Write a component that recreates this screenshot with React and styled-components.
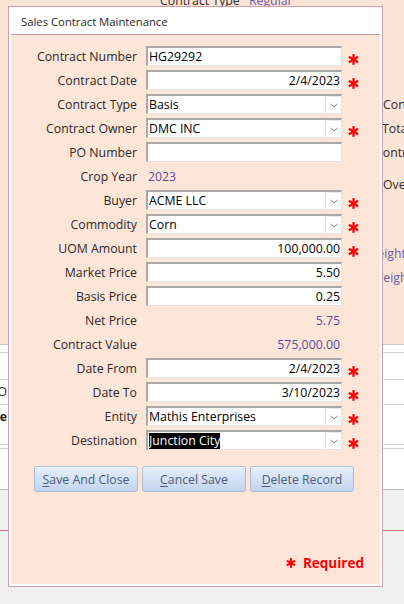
import styled, { createGlobalStyle } from "styled-components";

const Global = createGlobalStyle`
  html, body {
    margin: 0;
    padding: 0;
    background: #f0f0f0;
    overflow: hidden;
  }
  body {
    font-family: "Open Sans", "Noto Sans", sans-serif;
  }
`;

const rows = [
    { label: "Contract Number", kind: "text", value: "HG29292", req: true },
    { label: "Contract Date", kind: "text", value: "2/4/2023", align: "right", req: true },
    { label: "Contract Type", kind: "combo", value: "Basis" },
    { label: "Contract Owner", kind: "combo", value: "DMC INC", req: true },
    { label: "PO Number", kind: "text", value: "" },
    { label: "Crop Year", kind: "plain", value: "2023" },
    { label: "Buyer", kind: "combo", value: "ACME LLC", req: true },
    { label: "Commodity", kind: "combo", value: "Corn", req: true },
    { label: "UOM Amount", kind: "text", value: "100,000.00", align: "right", req: true },
    { label: "Market Price", kind: "text", value: "5.50", align: "right" },
    { label: "Basis Price", kind: "text", value: "0.25", align: "right" },
    { label: "Net Price", kind: "plain", value: "5.75", align: "right" },
    { label: "Contract Value", kind: "plain", value: "575,000.00", align: "right" },
    { label: "Date From", kind: "text", value: "2/4/2023", align: "right", req: true },
    { label: "Date To", kind: "text", value: "3/10/2023", align: "right", req: true },
    { label: "Entity", kind: "combo", value: "Mathis Enterprises", req: true },
    { label: "Destination", kind: "combo", value: "Junction City", selected: true, req: true },
];

const Asterisk = ({ size = 11 }) => (
    <svg width={size} height={size} viewBox="0 0 11 11">
        <g stroke="#ff0000" strokeWidth="2.3">
            <line x1="5.5" y1="0.2" x2="5.5" y2="10.8" />
            <line x1="0.9" y1="2.85" x2="10.1" y2="8.15" />
            <line x1="0.9" y1="8.15" x2="10.1" y2="2.85" />
        </g>
    </svg>
);

const Chevron = () => (
    <svg width="8" height="5" viewBox="0 0 8 5">
        <polyline points="0.5,0.8 4,4 7.5,0.8" fill="none" stroke="#8a8a8a" strokeWidth="1" />
    </svg>
);

const App = () => {
    return (
        <>
            <Global />
            <Page>
                <TopSection>
                    <TopCaption>
                        Contract Type <Purple>Regular</Purple>
                    </TopCaption>
                    <Note $mt={84} $left={383}>Contract Status</Note>
                    <Note $left={382}>Total Delivered</Note>
                    <Note $left={375}>Contract Balance</Note>
                    <Note $mt={8} $left={383}>Over Delivered</Note>
                    <Note $mt={45} $left={366} $purple>Weight, Grade</Note>
                    <Note $left={372} $purple>Weight</Note>
                </TopSection>
                <RowsSection>
                    <BgRow $h={8} />
                    <BgRow $h={27} />
                    <BgRow $h={25}>
                        <Clip>PO</Clip>
                    </BgRow>
                    <BgRow $h={40}>
                        <Clip $bold>Date</Clip>
                    </BgRow>
                    <BgRow $h={4} />
                    <BgRow $h={41} $last />
                </RowsSection>
                <GreyBand />
                <RedRule />

                <Dialog>
                    <TitleBar>Sales Contract Maintenance</TitleBar>
                    <Body>
                        <Form>
                            {rows.map((r) => (
                                <FormRow key={r.label}>
                                    <Label>{r.label}</Label>
                                    {r.kind === "plain" ? (
                                        <Plain $align={r.align}>{r.value}</Plain>
                                    ) : (
                                        <Field>
                                            <FieldText $align={r.align}>
                                                {r.selected ? <Selected>{r.value}</Selected> : r.value}
                                            </FieldText>
                                            {r.kind === "combo" && (
                                                <DropButton>
                                                    <Chevron />
                                                </DropButton>
                                            )}
                                        </Field>
                                    )}
                                    <Req>{r.req && <Asterisk />}</Req>
                                </FormRow>
                            ))}
                        </Form>
                        <Buttons>
                            <Button><u>S</u>ave And Close</Button>
                            <Button><u>C</u>ancel Save</Button>
                            <Button><u>D</u>elete Record</Button>
                        </Buttons>
                        <Footer>
                            <Asterisk size={10} />
                            <RequiredText>Required</RequiredText>
                        </Footer>
                    </Body>
                </Dialog>
            </Page>
        </>
    );
};

const Page = styled.div`
  position: relative;
  width: 404px;
  height: 604px;
  overflow: hidden;
  display: flex;
  flex-direction: column;
  background: #f0f0f0;
  font-size: 12.3px;
`;

const TopSection = styled.div`
  height: 344px;
  flex-shrink: 0;
  background: #fce4d6;
  display: flex;
  flex-direction: column;
`;

const TopCaption = styled.div`
  margin-top: -7px;
  padding-left: 160px;
  line-height: 16px;
  color: #2d2d2d;
  white-space: nowrap;
`;

const Purple = styled.span`
  margin-left: 6px;
  color: #6a5aa8;
`;

const Note = styled.div`
  margin-top: ${(p) => p.$mt || 0}px;
  padding-left: ${(p) => p.$left}px;
  height: 24px;
  line-height: 24px;
  white-space: nowrap;
  color: ${(p) => (p.$purple ? "#6a5aa8" : "#2d2d2d")};
`;

const RowsSection = styled.div`
  flex-shrink: 0;
  background: #fff;
  border-top: 1px solid #c6c6c6;
  display: flex;
  flex-direction: column;
`;

const BgRow = styled.div`
  height: ${(p) => p.$h}px;
  box-sizing: border-box;
  border-bottom: 1px solid ${(p) => (p.$last ? "#bdbdbd" : "#d6d6d6")};
  display: flex;
  align-items: flex-start;
`;

const Clip = styled.div`
  width: 7px;
  overflow: hidden;
  display: flex;
  justify-content: flex-end;
  white-space: nowrap;
  line-height: 24px;
  color: #222;
  font-weight: ${(p) => (p.$bold ? 700 : 400)};
`;

const GreyBand = styled.div`
  height: 40px;
  flex-shrink: 0;
  background: #f0f0f0;
`;

const RedRule = styled.div`
  height: 1px;
  flex-shrink: 0;
  background: #c8707a;
`;

const Dialog = styled.div`
  position: absolute;
  left: 8px;
  top: 6px;
  width: 375px;
  height: 581px;
  box-sizing: border-box;
  border: 1px solid #cf9ea4;
  background: #fff;
  padding: 0 2px 2px;
  display: flex;
  flex-direction: column;
`;

const TitleBar = styled.div`
  height: 28px;
  flex-shrink: 0;
  display: flex;
  align-items: center;
  padding-left: 10px;
  padding-top: 2px;
  box-sizing: border-box;
  font-size: 11.3px;
  color: #262626;
  border-bottom: 1px solid #c99a9d;
`;

const Body = styled.div`
  flex: 1;
  background: #fde6d8;
  display: flex;
  flex-direction: column;
  padding-top: 9px;
`;

const Form = styled.div`
  display: grid;
  grid-template-columns: 135px 196px 1fr;
  grid-auto-rows: 24px;
  align-items: center;
`;

const FormRow = styled.div`
  display: contents;
`;

const Label = styled.div`
  text-align: right;
  padding-right: 9px;
  color: #2b2b2b;
  white-space: nowrap;
`;

const Field = styled.div`
  height: 20px;
  box-sizing: border-box;
  background: #fff;
  border-top: 2px solid #a9a9a9;
  border-left: 2px solid #a9a9a9;
  border-right: 1px solid #e4e4e4;
  border-bottom: 1px solid #e4e4e4;
  display: flex;
  align-items: stretch;
`;

const FieldText = styled.div`
  flex: 1;
  display: flex;
  align-items: center;
  justify-content: ${(p) => (p.$align === "right" ? "flex-end" : "flex-start")};
  padding: 0 1px;
  color: #000;
  white-space: nowrap;
  overflow: hidden;
`;

const Selected = styled.span`
  background: #000;
  color: #fff;
  line-height: 16px;
`;

const DropButton = styled.div`
  width: 16px;
  box-sizing: border-box;
  border-left: 1px solid #e2e2e2;
  border-top: 1px solid #ececec;
  display: flex;
  align-items: center;
  justify-content: center;
`;

const Plain = styled.div`
  padding: 0 2px;
  color: #5b4d9e;
  text-align: ${(p) => p.$align || "left"};
`;

const Req = styled.div`
  padding-left: 6px;
  padding-top: 6px;
  display: flex;
  align-items: center;
`;

const Buttons = styled.div`
  display: flex;
  gap: 4px;
  margin-top: 14px;
  padding-left: 23px;
`;

const Button = styled.button`
  width: 104px;
  height: 26px;
  box-sizing: border-box;
  border: 1px solid #a8bcdb;
  border-radius: 3px;
  background: linear-gradient(#e6eefb, #c3d5f1);
  font-family: "Open Sans", "Noto Sans", sans-serif;
  font-size: 12.3px;
  color: #4f5d72;
  padding: 0;
  box-shadow: inset 0 1px 0 #f5f8fd;

  u {
    text-decoration-thickness: 1px;
    text-underline-offset: 2px;
  }
`;

const Footer = styled.div`
  margin-top: auto;
  display: flex;
  align-items: center;
  justify-content: flex-end;
  gap: 7px;
  padding-right: 16px;
  padding-bottom: 12px;
  line-height: 18px;
`;

const RequiredText = styled.span`
  font-size: 13.5px;
  font-weight: 700;
  color: #ff0000;
`;

export default App;
